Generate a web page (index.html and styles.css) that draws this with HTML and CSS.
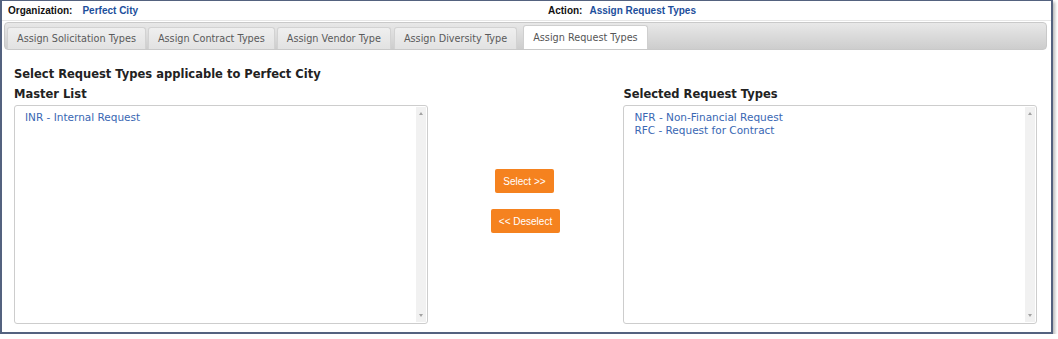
FILE: index.html
```html
<!DOCTYPE html>
<html>
<head>
<meta charset="utf-8">
<link rel="stylesheet" href="styles.css">
</head>
<body>
<div class="frame">
  <div class="header">
    <div class="hcell"><span class="hlabel">Organization:</span><span class="hvalue">Perfect City</span></div>
    <div class="hcell"><span class="hlabel">Action:</span><span class="hvalue">Assign Request Types</span></div>
  </div>
  <div class="tabbar">
    <div class="tab">Assign Solicitation Types</div>
    <div class="tab">Assign Contract Types</div>
    <div class="tab">Assign Vendor Type</div>
    <div class="tab">Assign Diversity Type</div>
    <div class="tab active">Assign Request Types</div>
  </div>
  <div class="content">
    <div class="title">Select Request Types applicable to Perfect City</div>
    <div class="columns">
      <div class="col">
        <div class="coltitle">Master List</div>
        <div class="listbox">
          <div class="items">
            <div class="item">INR - Internal Request</div>
          </div>
          <div class="scroll"><span class="up"></span><span class="down"></span></div>
        </div>
      </div>
      <div class="mid">
        <button class="btn sel">Select &gt;&gt;</button>
        <button class="btn">&lt;&lt; Deselect</button>
      </div>
      <div class="col">
        <div class="coltitle">Selected Request Types</div>
        <div class="listbox">
          <div class="items">
            <div class="item">NFR - Non-Financial Request</div>
            <div class="item">RFC - Request for Contract</div>
          </div>
          <div class="scroll"><span class="up"></span><span class="down"></span></div>
        </div>
      </div>
    </div>
  </div>
</div>
</body>
</html>
```
FILE: styles.css
```css
html, body { margin: 0; padding: 0; background: #fff; }
body { font-family: "DejaVu Sans", Verdana, sans-serif; }
.frame {
  width: 1049px;
  height: 331px;
  border-left: 2px solid #54627f;
  border-right: 2px solid #54627f;
  border-top: 1px solid #54627f;
  border-bottom: 2px solid #54627f;
  box-shadow: 2px 2px 3px #b8b8b8;
  background: #fff;
}
.header {
  display: grid;
  grid-template-columns: 540px 1fr;
  height: 19px;
  align-items: center;
  padding-left: 6px;
  border-bottom: 1px solid #e6e6e6;
  font-family: "Liberation Sans", Arial, sans-serif;
  font-size: 10px;
  font-weight: bold;
}
.hlabel { color: #111; }
.hcell:first-child .hlabel { margin-right: 10px; }
.hcell:last-child .hlabel { margin-right: 7px; }
.hvalue { color: #1d4f9c; }
.tabbar {
  margin: 1px 4px 0 2px;
  height: 26px;
  border: 1px solid #c9c9c9;
  border-radius: 4px;
  background: linear-gradient(#e8e8e8, #cdcdcd);
  display: flex;
  align-items: flex-end;
  padding-left: 2px;
  gap: 2px;
}
.tab {
  height: 21px;
  line-height: 21px;
  padding: 0 9px;
  font-size: 9.7px;
  color: #5a5a5a;
  background: linear-gradient(#efefef, #e2e2e2);
  border: 1px solid #d2d2d2;
  border-bottom: none;
  border-radius: 3px 3px 0 0;
}
.tab:nth-child(4) { margin-left: 1px; }
.tab.active {
  margin-left: 4px;
  height: 23px;
  line-height: 23px;
  background: #fff;
  color: #555;
  border-color: #cfcfcf;
}
.content { padding: 17px 14px 0 12px; }
.title { font-size: 11.5px; font-weight: bold; color: #222; line-height: 14px; }
.columns { display: flex; margin-top: 6px; }
.col { width: 414px; }
.coltitle { font-size: 11.5px; font-weight: bold; color: #222; line-height: 14px; margin-bottom: 4px; }
.listbox {
  height: 217px;
  border: 1px solid #cdcdcd;
  border-radius: 3px;
  display: flex;
}
.items { flex: 1; padding: 5px 10px; font-size: 10.5px; color: #3967b3; line-height: 13px; }
.scroll {
  width: 10px;
  margin: 1px 1px 1px 0;
  background: #f1f1f1;
  position: relative;
}
.up, .down {
  position: absolute;
  left: 3px;
  width: 0; height: 0;
  border-left: 2px solid transparent;
  border-right: 2px solid transparent;
}
.up { top: 5px; border-bottom: 3px solid #a3a3a3; }
.down { bottom: 5px; border-top: 3px solid #a3a3a3; }
.mid {
  width: 196px;
  display: flex;
  flex-direction: column;
  align-items: center;
  padding-top: 82px;
  gap: 16px;
}
.btn {
  font-family: "Liberation Sans", Arial, sans-serif;
  font-size: 10px;
  color: #fff;
  background: #f5821f;
  border: none;
  border-radius: 2px;
  height: 24px;
  padding: 0 8px;
  cursor: pointer;
}
.btn.sel { margin-right: 2px; }
```
